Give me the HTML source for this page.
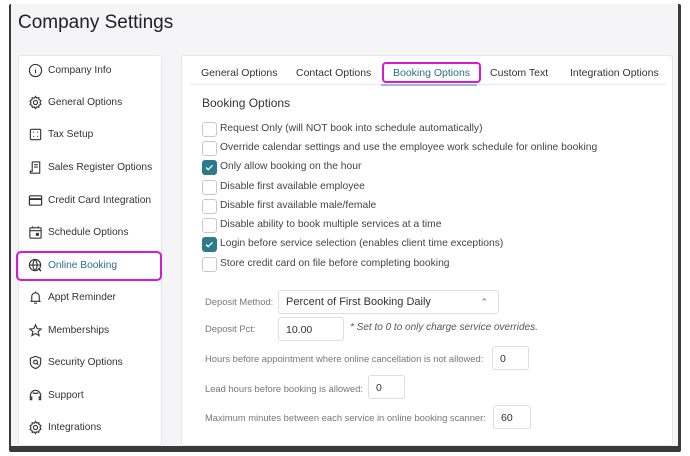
<!DOCTYPE html>
<html><head><style>
*{box-sizing:border-box;margin:0;padding:0}
body{width:690px;height:456px;background:#fff;font-family:"Liberation Sans",sans-serif;position:relative;overflow:hidden;color:#333}
.frame{position:absolute;left:9px;top:4px;width:672px;height:448px;background:#3a3a3a;border-radius:2px}
.inner{position:absolute;left:11px;top:4px;width:667px;height:442px;background:#f5f5f7}
h1{position:absolute;left:18px;top:12px;font-size:19px;font-weight:normal;color:#222}
.side{position:absolute;left:18px;top:55px;width:144px;height:391px;background:#fff;border:1px solid #e6e6e8;border-radius:3px}
.it{position:absolute;left:10px;font-size:10.2px;color:#333;height:14px;line-height:14px}
.it svg{position:absolute;left:0;top:-1px;width:15px;height:15px}
.it span{position:absolute;left:20px;white-space:nowrap}
.sel{position:absolute;left:16px;top:251px;width:146px;height:30px;border:2px solid #d51ad5;border-radius:5px}
.main{position:absolute;left:181px;top:55px;width:492px;height:391px;background:#fff;border:1px solid #e6e6e8;border-radius:3px}
.tab{position:absolute;top:67px;font-size:10.5px;color:#333;white-space:nowrap}
.tabline{position:absolute;left:190px;top:84px;width:476px;height:1px;background:#e8e8ea}
.cb{position:absolute;left:202px;width:15px;height:15px;border:1px solid #c8c8cc;border-radius:3px;background:#fff}
.cb.on{background:#2b7b8c;border-color:#2b7b8c}
.lbl{position:absolute;left:220px;font-size:10.3px;color:#444;white-space:nowrap}
.fl{position:absolute;left:205px;font-size:9.4px;color:#777;white-space:nowrap}
.in{position:absolute;background:#fff;border:1px solid #ddd;border-radius:3px;font-size:10.5px;color:#333;padding-left:7px}
</style></head><body>
<div class="frame"></div>
<div class="inner"></div>
<h1>Company Settings</h1>
<div class="side"></div>
<div class="sel"></div>
<div class="it" style="left:28px;top:64px"><svg viewBox="0 0 16 16" fill="none" stroke="#333" stroke-width="1.2"><circle cx="8" cy="8" r="6.5"/><path d="M8 7v4M8 5v.5"/></svg><span>Company Info</span></div>
<div class="it" style="left:28px;top:96px"><svg viewBox="0 0 16 16" fill="none" stroke="#333" stroke-width="1.2"><circle cx="8" cy="8" r="2.2"/><path d="M8 1.5l1.3 1.8 2.2-.6.3 2.2 2 1-1 2 1 2-2 1-.3 2.2-2.2-.6L8 14.5l-1.3-1.8-2.2.6-.3-2.2-2-1 1-2-1-2 2-1 .3-2.2 2.2.6z"/></svg><span>General Options</span></div>
<div class="it" style="left:28px;top:128px"><svg viewBox="0 0 16 16" fill="none" stroke="#333" stroke-width="1.2"><rect x="2.5" y="2.5" width="11" height="11" rx="1"/><path d="M5.5 5.5h1M9.5 5.5h1M5.5 10h1M9.5 10h1"/></svg><span>Tax Setup</span></div>
<div class="it" style="left:28px;top:161px"><svg viewBox="0 0 16 16" fill="none" stroke="#333" stroke-width="1.2"><path d="M4.5 2h8v10M4.5 2v10H2.5v2h10v-2M6.5 5h4M6.5 7.5h4"/></svg><span>Sales Register Options</span></div>
<div class="it" style="left:28px;top:194px"><svg viewBox="0 0 16 16" fill="none" stroke="#333" stroke-width="1.3"><rect x="1.5" y="3" width="13" height="10" rx="1"/><path d="M1.5 6.5h13" stroke-width="2"/></svg><span>Credit Card Integration</span></div>
<div class="it" style="left:28px;top:226px"><svg viewBox="0 0 16 16" fill="none" stroke="#333" stroke-width="1.2"><rect x="2" y="3" width="12" height="11" rx="1"/><path d="M2 6h12M5 1.5v2M11 1.5v2"/><rect x="9" y="9" width="2" height="2" fill="#333"/></svg><span>Schedule Options</span></div>
<div class="it" style="left:28px;top:259px;color:#2a6e8a"><svg viewBox="0 0 16 16" fill="none" stroke="#333" stroke-width="1.2"><circle cx="7.5" cy="7.5" r="6"/><path d="M1.5 7.5h12M7.5 1.5c-3 3.5-3 8.5 0 12M7.5 1.5c3 3.5 3 8.5 0 12"/><path d="M11 11l3 3" stroke-width="1.5"/></svg><span>Online Booking</span></div>
<div class="it" style="left:28px;top:291px"><svg viewBox="0 0 16 16" fill="none" stroke="#333" stroke-width="1.2"><path d="M4 12V7a4 4 0 018 0v5M2.5 12h11M6.5 14h3M8 1.5v1.5"/></svg><span>Appt Reminder</span></div>
<div class="it" style="left:28px;top:324px"><svg viewBox="0 0 16 16" fill="none" stroke="#333" stroke-width="1.2"><path d="M8 2l1.8 4 4.2.4-3.2 2.8 1 4.2L8 11.2 4.2 13.4l1-4.2L2 6.4 6.2 6z"/></svg><span>Memberships</span></div>
<div class="it" style="left:28px;top:356px"><svg viewBox="0 0 16 16" fill="none" stroke="#333" stroke-width="1.2"><path d="M8 1.5l5.5 2v4.5c0 3.5-2.5 5.5-5.5 6.5C5 13.5 2.5 11.5 2.5 8V3.5z"/><circle cx="8" cy="7.5" r="2"/><path d="M9.5 9l1.5 1.5"/></svg><span>Security Options</span></div>
<div class="it" style="left:28px;top:389px"><svg viewBox="0 0 16 16" fill="none" stroke="#333" stroke-width="1.2"><path d="M2.5 11V8a5.5 5.5 0 0111 0v3M2.5 9.5h1.5v3h-1.5zM12 9.5h1.5v3H12zM5 5c2 1 4 1 6 0"/></svg><span>Support</span></div>
<div class="it" style="left:28px;top:421px"><svg viewBox="0 0 16 16" fill="none" stroke="#333" stroke-width="1.2"><circle cx="8" cy="8" r="2.2"/><path d="M8 1.5l1.3 1.8 2.2-.6.3 2.2 2 1-1 2 1 2-2 1-.3 2.2-2.2-.6L8 14.5l-1.3-1.8-2.2.6-.3-2.2-2-1 1-2-1-2 2-1 .3-2.2 2.2.6z"/></svg><span>Integrations</span></div>

<div class="main"></div>
<div class="tab" style="left:201px">General Options</div>
<div class="tab" style="left:296px">Contact Options</div>
<div class="tab" style="left:393px;color:#2a6e8a">Booking Options</div>
<div class="tab" style="left:490px">Custom Text</div>
<div class="tab" style="left:570px">Integration Options</div>
<div class="tabline"></div>
<div style="position:absolute;left:381px;top:84px;width:96px;height:2px;background:#9fb8d8"></div>
<div style="position:absolute;left:382px;top:62px;width:99px;height:21px;border:2px solid #d51ad5;border-radius:4px"></div>

<div style="position:absolute;left:202px;top:96px;font-size:12px;color:#333">Booking Options</div>

<div class="cb" style="top:122px"></div><div class="lbl" style="top:123px">Request Only (will NOT book into schedule automatically)</div>
<div class="cb" style="top:141px"></div><div class="lbl" style="top:142px">Override calendar settings and use the employee work schedule for online booking</div>
<div class="cb on" style="top:160px"><svg viewBox="0 0 15 15" width="13" height="13"><path d="M3.5 7.5l2.5 2.5 5-5" fill="none" stroke="#fff" stroke-width="1.5"/></svg></div><div class="lbl" style="top:161px">Only allow booking on the hour</div>
<div class="cb" style="top:180px"></div><div class="lbl" style="top:181px">Disable first available employee</div>
<div class="cb" style="top:199px"></div><div class="lbl" style="top:200px">Disable first available male/female</div>
<div class="cb" style="top:218px"></div><div class="lbl" style="top:219px">Disable ability to book multiple services at a time</div>
<div class="cb on" style="top:237px"><svg viewBox="0 0 15 15" width="13" height="13"><path d="M3.5 7.5l2.5 2.5 5-5" fill="none" stroke="#fff" stroke-width="1.5"/></svg></div><div class="lbl" style="top:238px">Login before service selection (enables client time exceptions)</div>
<div class="cb" style="top:257px"></div><div class="lbl" style="top:258px">Store credit card on file before completing booking</div>

<div class="fl" style="top:296px">Deposit Method:</div>
<div class="in" style="left:278px;top:290px;width:221px;height:24px;line-height:22px;font-size:11px">Percent of First Booking Daily<span style="position:absolute;right:10px;font-size:9px;color:#666">⌃</span></div>
<div class="fl" style="top:323px">Deposit Pct:</div>
<div class="in" style="left:278px;top:317px;width:66px;height:24px;line-height:24px">10.00</div>
<div style="position:absolute;left:350px;top:322px;font-size:10px;font-style:italic;color:#555">* Set to 0 to only charge service overrides.</div>
<div class="fl" style="top:353px">Hours before appointment where online cancellation is not allowed:</div>
<div class="in" style="left:492px;top:346px;width:37px;height:24px;line-height:24px">0</div>
<div class="fl" style="top:383px">Lead hours before booking is allowed:</div>
<div class="in" style="left:368px;top:375px;width:37px;height:24px;line-height:24px">0</div>
<div class="fl" style="top:412px">Maximum minutes between each service in online booking scanner:</div>
<div class="in" style="left:493px;top:405px;width:38px;height:24px;line-height:24px">60</div>
</body></html>
